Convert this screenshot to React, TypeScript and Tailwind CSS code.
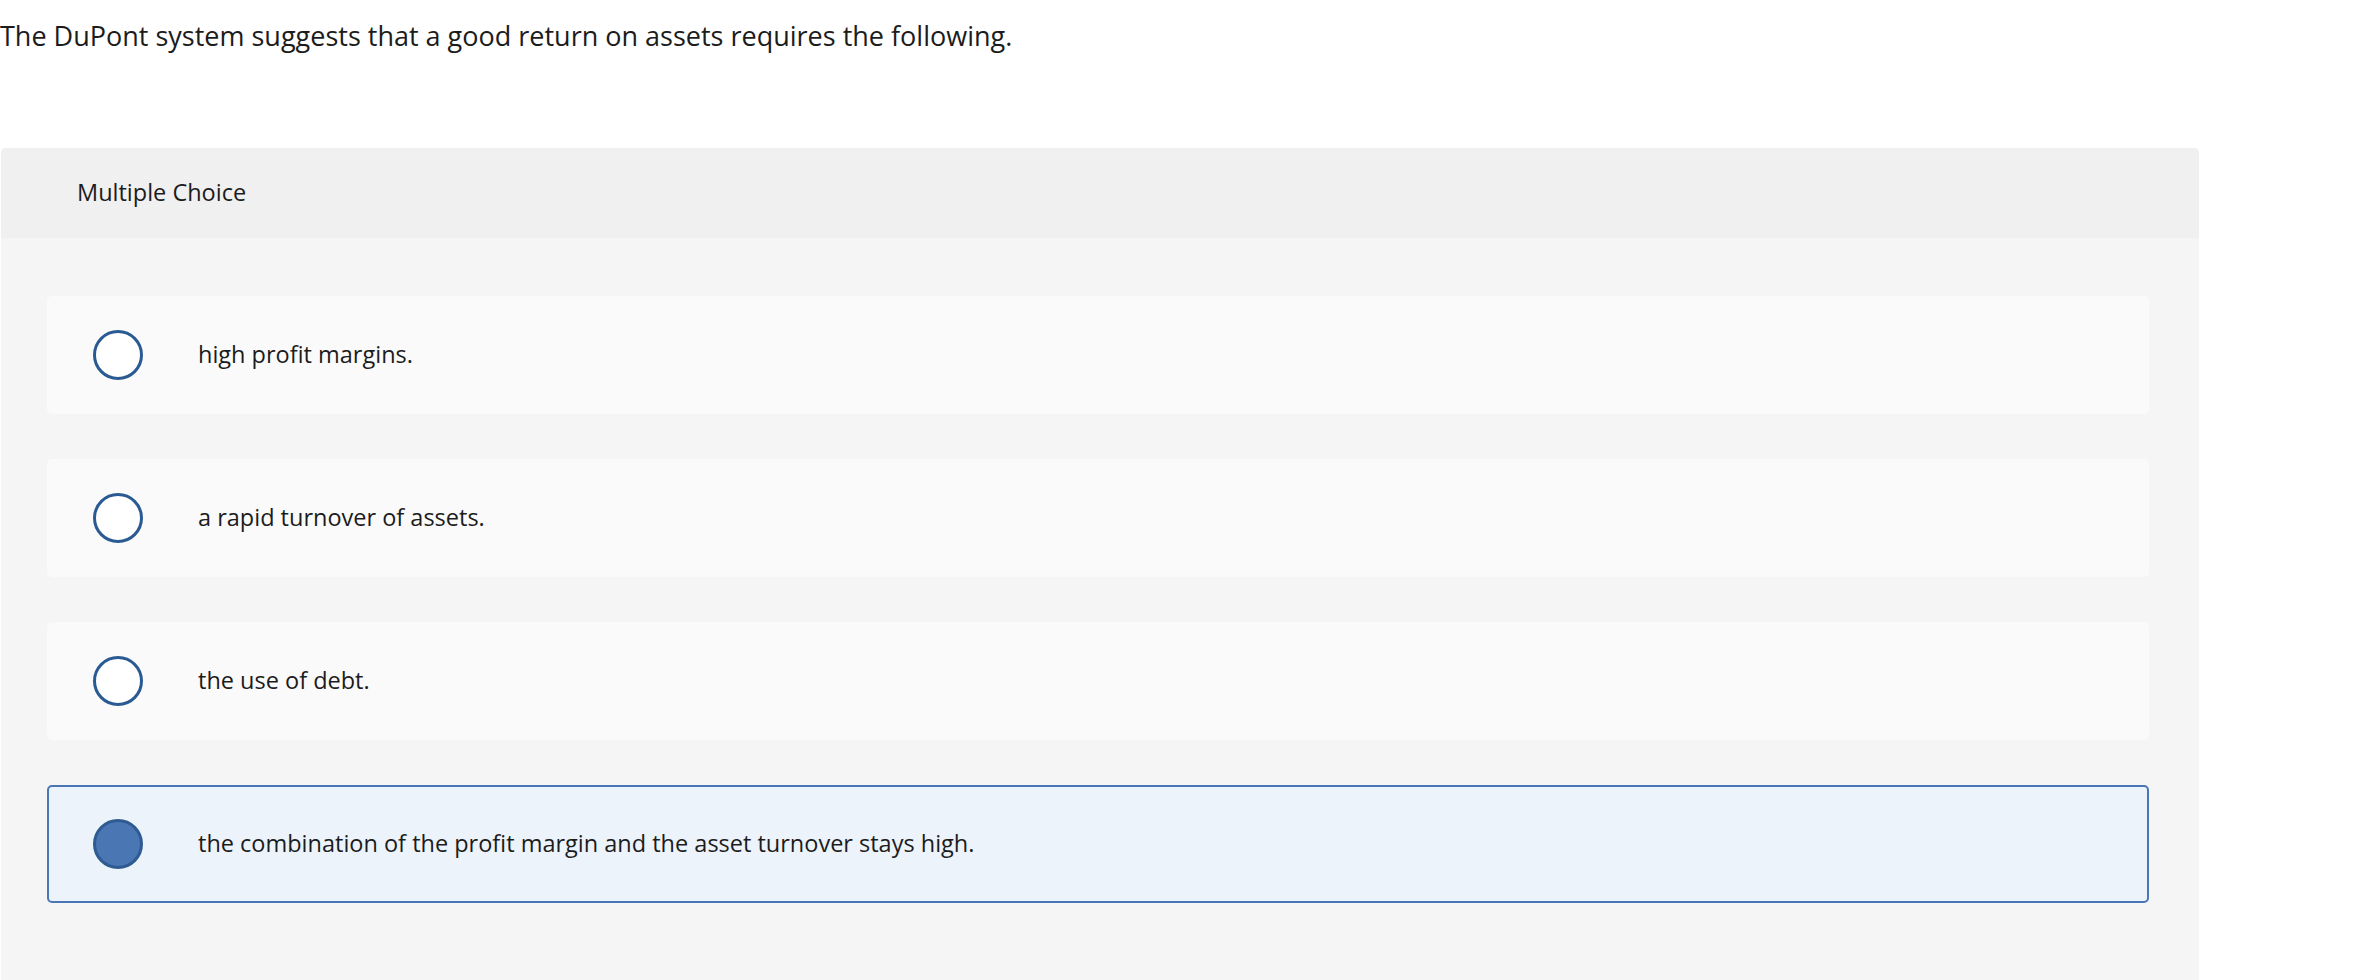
import React from 'react';

const choices = [
    { id: 'a', text: 'high profit margins.' },
    { id: 'b', text: 'a rapid turnover of assets.' },
    { id: 'c', text: 'the use of debt.' },
    { id: 'd', text: 'the combination of the profit margin and the asset turnover stays high.' },
];

const selectedId = 'd';

export default function App() {
    return (
        <div className="min-h-screen bg-white text-[#1c1c1c]" style={{ fontFamily: '"Open Sans", "Noto Sans", sans-serif' }}>
            {/* Question prompt */}
            <p className="pt-[18px] text-[27px] leading-[36px]">
                The DuPont system suggests that a good return on assets requires the following.
            </p>

            {/* Answer panel */}
            <div className="mt-[94px] ml-px w-[2198px] rounded-t-[5px] bg-[#f5f5f5] pb-20">
                <div className="flex h-[90px] items-center rounded-t-[5px] bg-[#f0f0f0] pl-[76px] text-[23.5px]">
                    Multiple Choice
                </div>

                <div className="flex flex-col gap-[45px] pt-[58px] pl-[46px] pr-[50px]">
                    {choices.map((c) => {
                        const selected = c.id === selectedId;
                        return (
                            <div
                                key={c.id}
                                className={
                                    selected
                                        ? 'flex h-[118px] items-center rounded-[5px] border-2 border-[#4a76b6] bg-[#ecf3fb] pl-[44px]'
                                        : 'flex h-[118px] items-center rounded-[5px] bg-[#fafafa] pl-[46px]'
                                }
                            >
                                <span
                                    className={
                                        selected
                                            ? 'h-[50px] w-[50px] shrink-0 rounded-full border-[3px] border-[#2e5b91] bg-[#4a76b4]'
                                            : 'h-[50px] w-[50px] shrink-0 rounded-full border-[3px] border-[#2a5a92] bg-white'
                                    }
                                />
                                <span className="ml-[55px] text-[23.5px]">{c.text}</span>
                            </div>
                        );
                    })}
                </div>
            </div>
        </div>
    );
}
